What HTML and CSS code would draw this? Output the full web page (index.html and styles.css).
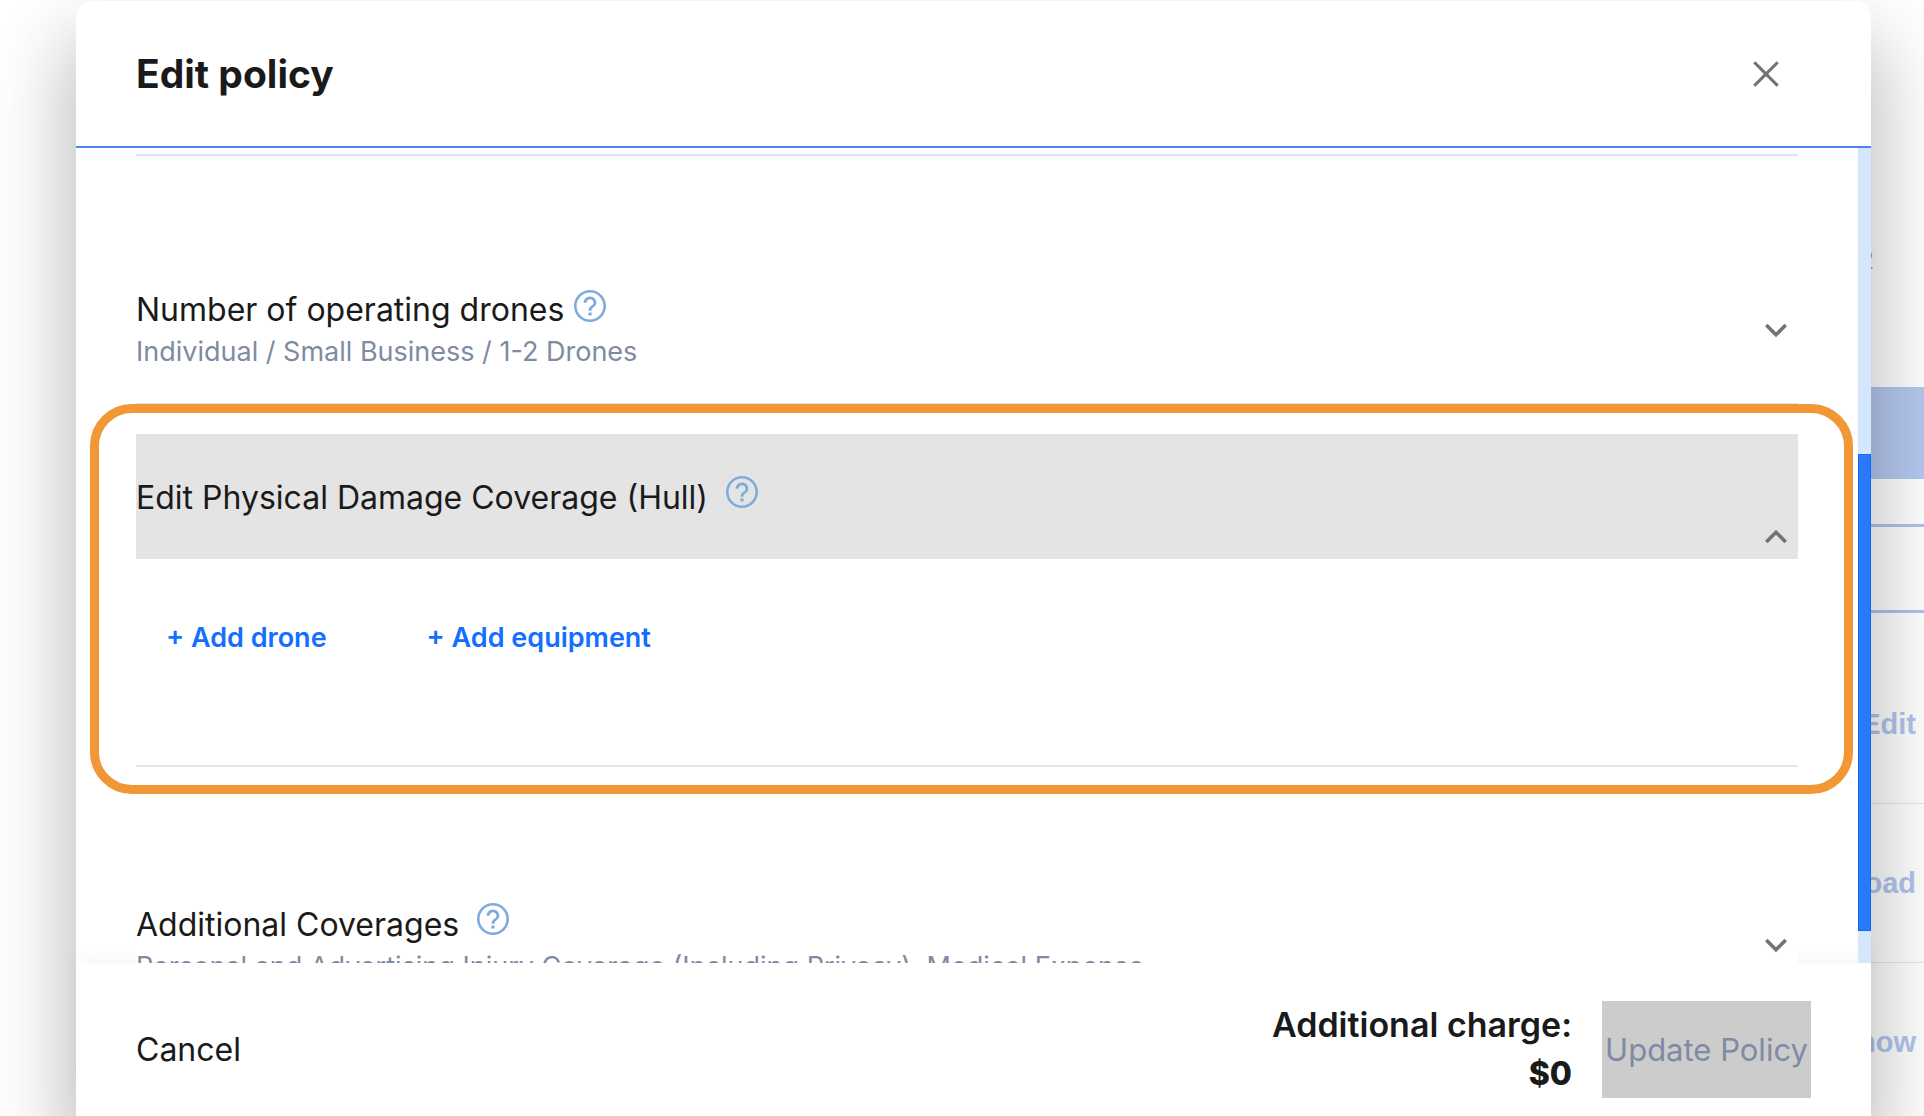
FILE: index.html
```html
<!DOCTYPE html>
<html lang="en">
<head>
    <meta charset="UTF-8">
    <meta name="viewport" content="width=device-width, initial-scale=1.0">
    <title>Edit policy</title>
    <link rel="stylesheet" href="styles.css">
</head>
<body>
    <!-- icons -->
    <svg class="icon-defs" aria-hidden="true">
        <symbol id="icon-help" viewBox="2 2 20 20">
            <path d="M11 18h2v-2h-2v2zm1-16C6.48 2 2 6.48 2 12s4.48 10 10 10 10-4.48 10-10S17.52 2 12 2zm0 18.400c-4.630 0-8.400-3.770-8.400-8.400s3.770-8.400 8.400-8.400 8.400 3.770 8.400 8.400-3.770 8.400-8.400 8.400zM12 6c-2.210 0-4 1.790-4 4h1.800c0-1.210.990-2.200 2.200-2.200s2.200.990 2.200 2.200c0 2-3.100 1.850-3.100 5h1.800c0-2.250 3.100-2.500 3.100-5 0-2.210-1.790-4-4-4z"/>
        </symbol>
        <symbol id="icon-down" viewBox="0 0 24 24">
            <path d="M16.590 8.590L12 13.170 7.410 8.590 6 10l6 6 6-6z"/>
        </symbol>
        <symbol id="icon-up" viewBox="0 0 24 24">
            <path d="M12 8l-6 6 1.410 1.410L12 10.830l4.590 4.580L18 14z"/>
        </symbol>
        <symbol id="icon-close" viewBox="0 0 24 24">
            <path d="M19 6.200L17.800 5 12 10.800 6.200 5 5 6.200 10.800 12 5 17.800 6.200 19 12 13.200 17.800 19 19 17.800 13.200 12z"/>
        </symbol>
    </svg>

    <!-- policy page behind the dialog -->
    <main class="page">
        <div class="page-year">2022</div>
        <div class="page-banner"></div>
        <div class="page-box"></div>
        <div class="page-row first"><a href="#">Edit</a></div>
        <div class="page-row"><a href="#">Download</a></div>
        <div class="page-row"><a href="#">Show</a></div>
    </main>

    <div class="modal" role="dialog" aria-labelledby="modal-title">
        <header class="modal-header">
            <h1 id="modal-title">Edit policy</h1>
            <button type="button" class="icon-btn" aria-label="Close">
                <svg class="icon"><use href="#icon-close"/></svg>
            </button>
        </header>

        <div class="modal-body">
            <div class="sections">
                <div class="section section-prev"></div>

                <section class="section">
                    <div class="section-head">
                        <div>
                            <h2>Number of operating drones <svg class="help near"><use href="#icon-help"/></svg></h2>
                            <p>Individual / Small Business / 1-2 Drones</p>
                        </div>
                        <button type="button" class="icon-btn" aria-label="Expand drones">
                            <svg class="icon"><use href="#icon-down"/></svg>
                        </button>
                    </div>
                </section>

                <section class="section open">
                    <div class="section-head">
                        <h2>Edit Physical Damage Coverage (Hull) <svg class="help"><use href="#icon-help"/></svg></h2>
                        <button type="button" class="icon-btn" aria-label="Collapse hull coverage">
                            <svg class="icon"><use href="#icon-up"/></svg>
                        </button>
                    </div>
                    <div class="add-links">
                        <button type="button">+ Add drone</button>
                        <button type="button">+ Add equipment</button>
                    </div>
                    <div class="highlight"></div>
                </section>

                <section class="section last">
                    <div class="section-head">
                        <div>
                            <h2>Additional Coverages <svg class="help"><use href="#icon-help"/></svg></h2>
                            <p>Personal and Advertising Injury Coverage (Including Privacy), Medical Expense</p>
                        </div>
                        <button type="button" class="icon-btn" aria-label="Expand additional coverages">
                            <svg class="icon"><use href="#icon-down"/></svg>
                        </button>
                    </div>
                </section>
            </div>
            <div class="scrollbar">
                <div class="thumb"></div>
            </div>
        </div>

        <footer class="modal-footer">
            <button type="button" class="cancel">Cancel</button>
            <div class="charge">
                <div>Additional charge:</div>
                <strong>$0</strong>
            </div>
            <button type="button" class="update" disabled>Update Policy</button>
        </footer>
    </div>
</body>
</html>
```
FILE: styles.css
```css
:root {
    --text: #1a1a1a;
    --muted: #7f8aa3;
    --blue: #146eff;
    --line: #e4e4e4;
    --orange: #f29736;
}

* {
    box-sizing: border-box;
}

body {
    margin: 0;
    height: 100vh;
    overflow: hidden;
    position: relative;
    background: #fff;
    color: var(--text);
    font-family: Inter, sans-serif;
    font-size: 32px;
}

h1, h2, p {
    margin: 0;
}

button {
    border: 0;
    padding: 0;
    background: none;
    color: inherit;
    font: inherit;
}

.icon-defs {
    display: none;
}

/* page behind */
.page {
    display: flex;
    flex-direction: column;
    width: 50%;
    height: 100vh;
    margin-left: auto;
    text-align: right;
}

.page-year {
    flex: 0 0 387px;
    padding: 244px 50px 0 0;
    font-size: 26px;
    line-height: 32px;
    color: #999;
}

.page-banner {
    flex: 0 0 92px;
    background: #b5c9f1;
}

.page-box {
    flex: 0 0 89px;
    margin-top: 45px;
    border-top: 3px solid #b0c3ec;
    border-bottom: 3px solid #b0c3ec;
}

.page-row {
    flex: 0 0 159px;
    padding-right: 8px;
    border-bottom: 1px solid #e6e6e6;
    line-height: 156px;
}

.page-row.first {
    margin-top: 32px;
}

.page-row a {
    color: #b2c5ef;
    font-family: "Liberation Sans", sans-serif;
    font-size: 29px;
    font-weight: 700;
    text-decoration: none;
}

/* dialog */
.modal {
    position: absolute;
    inset: 1px 53px 0 76px;
    display: flex;
    flex-direction: column;
    background: #fff;
    border-radius: 16px 16px 0 0;
    box-shadow: 0 48px 76px 6px rgba(0, 0, 0, 0.16),
                0 40px 84px 10px rgba(0, 0, 0, 0.12);
}

.modal-header {
    flex: 0 0 147px;
    display: flex;
    align-items: center;
    justify-content: space-between;
    padding: 0 83px 0 60px;
    border-bottom: 2px solid #4a84f2;
}

.modal-header h1 {
    font-size: 39px;
    line-height: 48px;
    font-weight: 700;
}

.icon-btn {
    display: block;
    height: 44px;
}

.icon {
    display: block;
    width: 44px;
    height: 44px;
    fill: #737373;
}

.modal-body {
    flex: 1;
    min-height: 0;
    display: flex;
    overflow: hidden;
}

.sections {
    flex: 1;
    padding: 0 60px;
}

.section {
    position: relative;
    z-index: 2;
    padding: 132px 0 31px;
    border-bottom: 2px solid var(--line);
    background: #fff;
}

.section-prev {
    padding: 6px 0 0;
}

.section.last {
    padding-top: 136px;
}

.section-head {
    display: flex;
    align-items: center;
    justify-content: space-between;
}

.section h2 {
    display: flex;
    align-items: center;
    gap: 18px;
    font-size: 32px;
    line-height: 44px;
    font-weight: 400;
}

.section p {
    font-size: 27px;
    line-height: 40px;
    color: var(--muted);
}

.help {
    width: 32px;
    height: 32px;
    margin-bottom: 12px;
    fill: #7dabde;
}

.help.near {
    margin: 0 0 8px -8px;
}

.section.open {
    z-index: 3;
    padding: 29px 0 105px;
}

.open .section-head {
    height: 125px;
    padding-top: 2px;
    background: #e4e4e4;
}

.open .icon-btn {
    align-self: flex-end;
}

.add-links {
    display: flex;
    gap: 100px;
    padding: 57px 30px 0;
}

.add-links button {
    color: var(--blue);
    font-size: 27px;
    line-height: 44px;
    font-weight: 600;
}

.highlight {
    position: absolute;
    inset: -1px -55px -29px -46px;
    border: 9px solid var(--orange);
    border-radius: 42px;
    pointer-events: none;
}

.scrollbar {
    position: relative;
    z-index: 2;
    flex: 0 0 13px;
    display: flex;
    flex-direction: column;
    background: #d5e7fc;
}

.scrollbar::before {
    content: "";
    flex: 307;
}

.scrollbar::after {
    content: "";
    flex: 32;
}

.thumb {
    flex: 476;
    background: #2979f8;
    border: 1px solid #0a6bff;
}

.modal-footer {
    position: relative;
    z-index: 1;
    display: flex;
    align-items: center;
    gap: 30px;
    padding: 38px 60px 18px;
    background: #fff;
    box-shadow: 0 -8px 16px rgba(0, 0, 0, 0.03);
}

.charge {
    margin-left: auto;
    text-align: right;
    font-size: 34px;
    line-height: 48px;
    font-weight: 600;
}

.charge strong {
    font-size: 32px;
    font-weight: 800;
}

.update {
    width: 209px;
    height: 97px;
    background: #ccc;
    color: var(--muted);
    font-size: 31px;
}
```
